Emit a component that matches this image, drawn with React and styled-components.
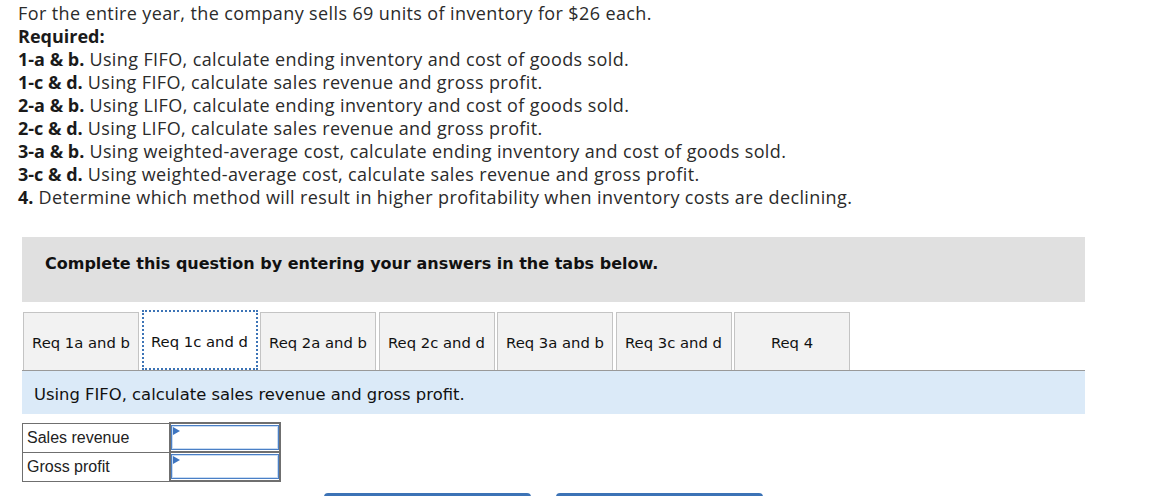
import React from "react";
import styled, { createGlobalStyle } from "styled-components";

const Global = createGlobalStyle`
  html, body { margin: 0; padding: 0; background: #fff; }
  body { width: 1170px; height: 496px; overflow: hidden; }
`;

const Page = styled.div`
  padding: 2px 85px 0 22px;
`;

const Intro = styled.div`
  margin-left: -4px;
  font-family: "Open Sans", Lato, sans-serif;
  font-size: 18px;
  letter-spacing: 0.38px;
  line-height: 23px;
  color: #2b2b2b;
`;

const Line = styled.div``;

const B = styled.b`
  font-weight: 700;
  letter-spacing: 0;
  color: #1a1a1a;
`;

const Prompt = styled.div`
  margin-top: 28px;
  height: 65px;
  box-sizing: border-box;
  background: #e0e0e0;
  padding: 17px 0 0 23px;
  font-family: Verdana, "DejaVu Sans", sans-serif;
  font-weight: 700;
  font-size: 16px;
  color: #111;
`;

const TabStrip = styled.div`
  margin-top: 10px;
  display: flex;
  gap: 2.5px;
  padding-left: 1px;
  border-bottom: 1px solid #999;
  height: 58px;
`;

const Tab = styled.div`
  width: 116px;
  box-sizing: border-box;
  display: flex;
  align-items: center;
  justify-content: center;
  font-family: Verdana, "DejaVu Sans", sans-serif;
  font-size: 14.8px;
  white-space: nowrap;
  color: #111;
  background: ${(p) => (p.$active ? "#fff" : "#f2f2f2")};
  border: ${(p) => (p.$active ? "2px dotted #3d74b6" : "1px solid #c4c4c4")};
  border-bottom: ${(p) => (p.$active ? "2px dotted #3d74b6" : "none")};
  height: ${(p) => (p.$active ? "60px" : "58px")};
  margin-top: ${(p) => (p.$active ? "-2px" : "0")};
  padding-top: ${(p) => (p.$active ? "3px" : "1px")};
  position: relative;
  z-index: ${(p) => (p.$active ? 1 : 0)};
`;

const Info = styled.div`
  background: #dbeaf8;
  height: 43px;
  display: flex;
  align-items: center;
  padding-left: 12px;
  padding-top: 3px;
  box-sizing: border-box;
  font-family: Verdana, "DejaVu Sans", sans-serif;
  font-size: 16.4px;
  color: #111;
`;

const Table = styled.table`
  margin-top: 8px;
  border-collapse: collapse;
  font-family: Arial, "Liberation Sans", sans-serif;
  font-size: 16px;
  color: #222;
`;

const LabelCell = styled.td`
  width: 147px;
  height: 29px;
  box-sizing: border-box;
  border: 1px solid #6f6f6f;
  padding: 0 0 0 4px;
  vertical-align: middle;
`;

const InputCell = styled.td`
  width: 110px;
  height: 29px;
  box-sizing: border-box;
  border: 2px solid #6f6f6f;
  padding: 0;
  position: relative;
`;

const Input = styled.div`
  height: 25px;
  box-sizing: border-box;
  border: 1px solid #4a7fc6;
  box-shadow: inset 0 0 0 1px #c9dcf2;
  background: #fff;
  position: relative;
`;

const Marker = styled.span`
  position: absolute;
  left: 1px;
  top: 1px;
  width: 0;
  height: 0;
  border-top: 4px solid transparent;
  border-bottom: 4px solid transparent;
  border-left: 7px solid #3d74c0;
`;

const ButtonRow = styled.div`
  margin-top: 11px;
  display: flex;
  gap: 25px;
  padding-left: 302px;
`;

const NavButton = styled.div`
  width: 207px;
  height: 30px;
  background: #3c73b6;
  border-radius: 4px 4px 0 0;
`;

const tabs = [
  "Req 1a and b",
  "Req 1c and d",
  "Req 2a and b",
  "Req 2c and d",
  "Req 3a and b",
  "Req 3c and d",
  "Req 4",
];

export default function App() {
  return (
    <>
      <Global />
      <Page>
        <Intro>
          <Line>For the entire year, the company sells 69 units of inventory for $26 each.</Line>
          <Line><B>Required:</B></Line>
          <Line><B>1-a &amp; b.</B> Using FIFO, calculate ending inventory and cost of goods sold.</Line>
          <Line><B>1-c &amp; d.</B> Using FIFO, calculate sales revenue and gross profit.</Line>
          <Line><B>2-a &amp; b.</B> Using LIFO, calculate ending inventory and cost of goods sold.</Line>
          <Line><B>2-c &amp; d.</B> Using LIFO, calculate sales revenue and gross profit.</Line>
          <Line><B>3-a &amp; b.</B> Using weighted-average cost, calculate ending inventory and cost of goods sold.</Line>
          <Line><B>3-c &amp; d.</B> Using weighted-average cost, calculate sales revenue and gross profit.</Line>
          <Line><B>4.</B> Determine which method will result in higher profitability when inventory costs are declining.</Line>
        </Intro>
        <Prompt>Complete this question by entering your answers in the tabs below.</Prompt>
        <TabStrip>
          {tabs.map((t, i) => (
            <Tab key={t} $active={i === 1}>{t}</Tab>
          ))}
        </TabStrip>
        <Info>Using FIFO, calculate sales revenue and gross profit.</Info>
        <Table>
          <tbody>
            <tr>
              <LabelCell>Sales revenue</LabelCell>
              <InputCell><Input><Marker /></Input></InputCell>
            </tr>
            <tr>
              <LabelCell>Gross profit</LabelCell>
              <InputCell><Input><Marker /></Input></InputCell>
            </tr>
          </tbody>
        </Table>
        <ButtonRow>
          <NavButton />
          <NavButton />
        </ButtonRow>
      </Page>
    </>
  );
}
